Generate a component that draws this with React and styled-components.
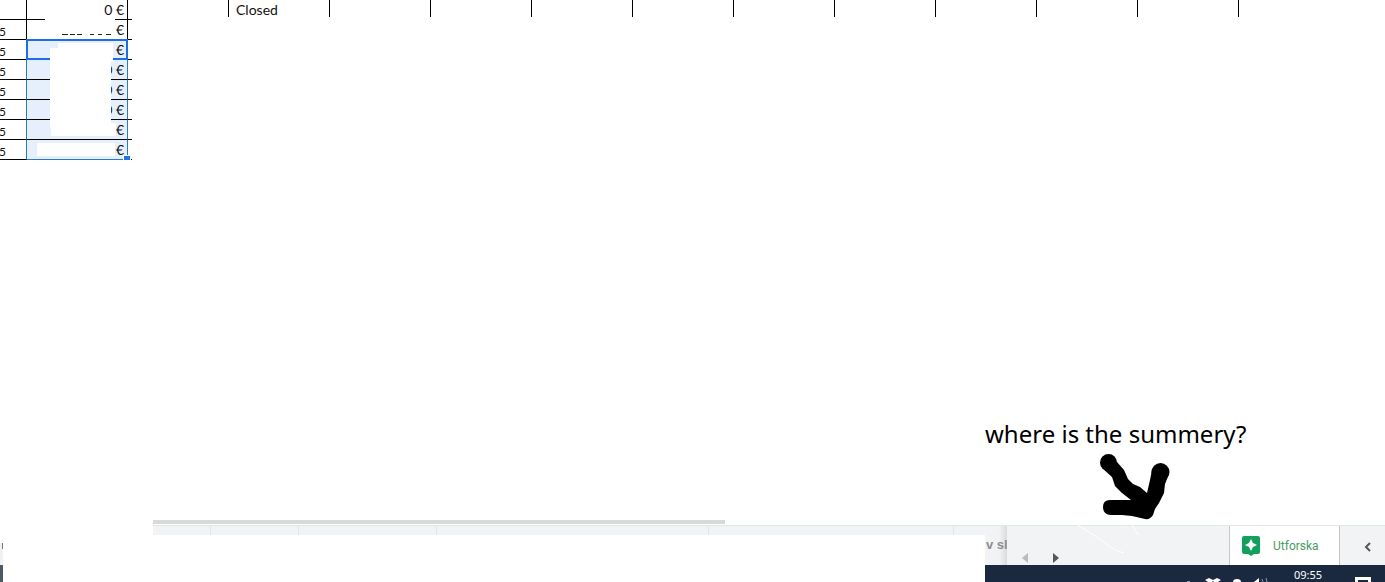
import React from 'react'
import styled, { createGlobalStyle } from 'styled-components'

const GlobalStyle = createGlobalStyle`
  * {
    box-sizing: border-box;
  }
  body {
    margin: 0;
    background: #fff;
  }
`

const Page = styled.div`
  display: flex;
  flex-direction: column;
  min-height: 100vh;
  overflow: hidden;
  font-family: Lato, 'Liberation Sans', sans-serif;
  color: #111;
`

const Sheet = styled.main`
  display: flex;
  align-items: flex-start;
  gap: 96px;
`

const SelectionArea = styled.div`
  position: relative;
  flex: none;
  width: 132px;
`

const Grid = styled.table`
  table-layout: fixed;
  width: 100%;
  border-collapse: separate;
  border-spacing: 0;
`

const Row = styled.tr`
  height: 20px;
`

const Cell = styled.td`
  width: ${p => p.$width}px;
  height: 20px;
  padding: 1px 3px 0 0;
  border-bottom: 1px solid #000;
  border-right: ${p => (p.$last ? 0 : 1)}px solid
    ${p => (p.$selected ? '#2a7ac8' : '#000')};
  background: ${p => (p.$fill ? '#e6effc' : 'transparent')};
  font-size: 14px;
  line-height: 17px;
  text-align: right;
  vertical-align: top;
  white-space: nowrap;
`

const RowEnd = styled(Cell)`
  padding: 0;
`

const YearCell = styled(Cell)`
  padding: 4px 0 0;
  font-size: 12px;
  line-height: 15px;
  text-align: left;
  text-indent: -1px;
`

const Overlay = styled.svg`
  position: absolute;
  top: 0;
  left: 0;
`

const Columns = styled.table`
  table-layout: fixed;
  flex: none;
  width: 1111px;
  border-collapse: separate;
  border-spacing: 0;
`

const ColumnCell = styled.td`
  height: 17px;
  padding: 2px 0 0 7px;
  border-left: 1px solid #000;
  font-size: 14px;
  line-height: 15px;
`

const Note = styled.section`
  display: flex;
  flex-direction: column;
  align-self: flex-end;
  width: 400px;
  margin-top: auto;
`

const NoteText = styled.p`
  margin: 0;
  color: #000;
  font-family: 'Noto Sans', sans-serif;
  font-size: 24px;
  line-height: 32px;
`

const Arrow = styled.svg`
  margin: 2px 0 0 115px;
`

const Footer = styled.footer`
  display: grid;
  grid-template-columns: 153px 1fr 400px;
  height: 62px;
`

const LeftEdge = styled.div`
  align-self: end;
  width: 3px;
  height: 39px;
  border-bottom: 17px solid #4a5b66;
  background: #eff1f3;
`

const EdgeMark = styled.div`
  width: 1px;
  height: 6px;
  margin-left: 2px;
  background: #777;
`

const TabStrip = styled.div`
  display: flex;
  flex-direction: column;
`

const ScrollBar = styled.div`
  width: 572px;
  height: 4px;
  background: #d9d9da;
`

const Tabs = styled.div`
  display: flex;
  height: 10px;
  margin-top: 1px;
  border-top: 1px solid #dfe8e8;
  background: #f1f3f4;
`

const Tab = styled.div`
  width: ${p => p.$width}px;
  border-right: 1px solid #e3e5e6;
`

const Right = styled.div`
  display: flex;
  flex-direction: column;
  padding-top: 5px;
`

const SheetBar = styled.nav`
  display: flex;
  height: 40px;
  border-top: 1px solid #dfe8e8;
  background: #f1f3f4;
`

const CutTab = styled.button`
  width: 22px;
  padding: 0 0 2px 1px;
  border: 0;
  background: linear-gradient(to right, #f1f3f4 14px, #d9dbdc 22px);
  color: #8b8e90;
  font: bold 13px/16px 'Liberation Sans', sans-serif;
  text-align: left;
  white-space: nowrap;
  overflow: hidden;
`

const Scroller = styled.div`
  display: flex;
  flex: 1;
  align-items: flex-end;
  gap: 25px;
  padding: 0 0 1px 15px;
`

const IconButton = styled.button`
  display: flex;
  align-items: center;
  justify-content: center;
  width: ${p => p.$width}px;
  padding: 0;
  border: 0;
  background: none;
`

const Scratches = styled.svg`
  margin: 0 0 10px -6px;
`

const Explore = styled.button`
  display: flex;
  align-items: center;
  gap: 13px;
  width: 111px;
  padding: 0 0 0 12px;
  border: solid #c4c6c8;
  border-width: 0 1px;
  background: #fff;
  color: #4a9b64;
  font: 12px/16px Roboto, sans-serif;
`

const Collapse = styled(IconButton)`
  padding: 2px 0 0 10px;
`

const TaskBar = styled.div`
  display: flex;
  justify-content: flex-end;
  height: 17px;
  background: #1b2940;
`

const Clock = styled.time`
  width: 62px;
  padding: 2px 0 0 22px;
  color: #fff;
  font: 11px/15px 'Noto Sans', sans-serif;
`

const rows = [
  { year: '', amount: '0 €' },
  { year: '5', amount: '€' },
  { year: '5', amount: '€', fill: true },
  { year: '5', amount: '0 €', fill: true },
  { year: '5', amount: '0 €', fill: true },
  { year: '5', amount: '0 €', fill: true },
  { year: '5', amount: '€', fill: true },
  { year: '5', amount: '€', fill: true }
]

const columns = ['Closed', '', '', '', '', '', '', '', '', '', '']

const tabs = [58, 88, 138, 272, 245]

const Selection = () => (
  <SelectionArea>
    <Grid>
      <tbody>
        {rows.map((row, i) => (
          <Row key={i}>
            <YearCell $width={27} $selected={row.fill}>
              {row.year}
            </YearCell>
            <Cell $width={101} $selected={row.fill} $fill={row.fill}>
              {row.amount}
            </Cell>
            <RowEnd $width={4} $last />
          </Row>
        ))}
      </tbody>
    </Grid>
    <Overlay width='132' height='161' shapeRendering='crispEdges'>
      <rect x='27' y='40' width='100' height='19' fill='none' stroke='#1a6fe8' strokeWidth='2' />
      <path d='M27 159.500H127' stroke='#2a7ac8' />
      <path
        fill='#fff'
        d='M45 18H115V21H45zM58 43H113V62H111V123H116V136H51V127H50V48H58zM37 143H115V156H37z'
      />
      <path
        stroke='#222'
        d='M62 34.500h6M70 34.500h5M77 34.500h5M90 34.500h4M98 34.500h4M106 34.500h5'
      />
      <rect x='123' y='155' width='8' height='6' fill='#fff' />
      <rect x='124' y='156' width='6' height='4' fill='#1a73e8' />
    </Overlay>
  </SelectionArea>
)

const App = () => (
  <Page>
    <GlobalStyle />
    <Sheet>
      <Selection />
      <Columns>
        <tbody>
          <tr>
            {columns.map((name, i) => (
              <ColumnCell key={i}>{name}</ColumnCell>
            ))}
          </tr>
        </tbody>
      </Columns>
    </Sheet>
    <Note>
      <NoteText>where is the summery?</NoteText>
      <Arrow width='72' height='68' viewBox='1100 452 72 68'>
        <circle cx='1108.5' cy='462.500' r='8.500' />
        <circle cx='1160.5' cy='472' r='9' />
        <path d='M1117 462L1124 470L1128 479L1133 484L1140 487L1147 493L1150 480L1152 470L1169 474L1165 484L1164 493L1159 503L1155 509L1153 515Q1150 520 1145 519L1132 516L1122 515H1110Q1103 514 1103 507Q1103 500 1110 500H1131L1122 493L1115 486L1112 477L1102 468z' />
      </Arrow>
    </Note>
    <Footer>
      <LeftEdge>
        <EdgeMark />
      </LeftEdge>
      <TabStrip>
        <ScrollBar />
        <Tabs>
          {tabs.map((width, i) => (
            <Tab key={i} $width={width} />
          ))}
        </Tabs>
      </TabStrip>
      <Right>
        <SheetBar>
          <CutTab>v sl</CutTab>
          <Scroller>
            <IconButton $width={6} aria-label='Previous sheets'>
              <svg width='6' height='12'>
                <path d='M6 1V11L0 6z' fill='#b9bbbd' />
              </svg>
            </IconButton>
            <IconButton $width={6} aria-label='Next sheets'>
              <svg width='6' height='12'>
                <path d='M0 1V11L6 6z' fill='#55585b' />
              </svg>
            </IconButton>
            <Scratches width='64' height='29' fill='none' stroke='#fff'>
              <path d='M0 0L19 12L37 25L46 28M54 0L60 10' />
            </Scratches>
          </Scroller>
          <Explore>
            <svg width='18' height='20'>
              <path
                d='M2 0H16Q18 0 18 2V16Q18 18 16 18H12L9 20L6 18H2Q0 18 0 16V2Q0 0 2 0z'
                fill='#12a05c'
              />
              <path d='M9 3L11 7L15 9L11 11L9 15L7 11L3 9L7 7z' fill='#fff' />
            </svg>
            Utforska
          </Explore>
          <Collapse $width={45} aria-label='Show side panel'>
            <svg width='8' height='12' fill='none' stroke='#55585b' strokeWidth='2'>
              <path d='M6 2L2 6L6 10' />
            </svg>
          </Collapse>
        </SheetBar>
        <TaskBar>
          <svg width='90' height='17' viewBox='1182 565 90 17' fill='#fff'>
            <path d='M1187 581h3v1h-3z' fill='#8d96a5' />
            <path d='M1205 580L1209 578L1213 580L1217 578L1221 580L1218 582H1214L1213 581L1212 582H1208z' />
            <path d='M1233 582Q1233 579 1237 579Q1241 579 1241 582z' />
            <path d='M1254 582L1259 578V582z' />
            <path d='M1262 579l1 3M1266 578l1 4' fill='none' stroke='#8d96a5' />
          </svg>
          <Clock>09:55</Clock>
          <svg width='51' height='17' viewBox='1334 565 51 17'>
            <path d='M1355 577H1371V582H1355z' fill='#fff' />
            <path d='M1358 581H1368' stroke='#1b2940' strokeWidth='2' />
          </svg>
        </TaskBar>
      </Right>
    </Footer>
  </Page>
)

export default App
